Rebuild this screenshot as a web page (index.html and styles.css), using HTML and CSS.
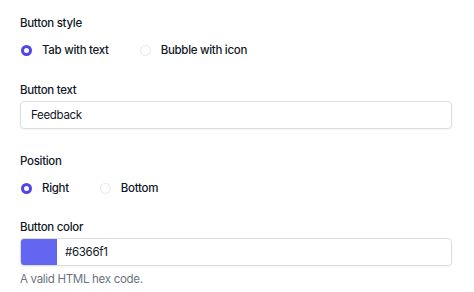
FILE: index.html
```html
<!DOCTYPE html>
<html>
<head>
<meta charset="utf-8">
<link rel="stylesheet" href="styles.css">
</head>
<body>
<form class="settings">
  <fieldset class="field">
    <legend class="label">Button style</legend>
    <div class="radios">
      <label class="radio"><span class="dot checked"></span>Tab with text</label>
      <label class="radio"><span class="dot"></span>Bubble with icon</label>
    </div>
  </fieldset>
  <div class="field after-radios">
    <div class="label label-input">Button text</div>
    <div class="input"><span class="value">Feedback</span></div>
  </div>
  <fieldset class="field after-input">
    <legend class="label">Position</legend>
    <div class="radios">
      <label class="radio"><span class="dot checked"></span>Right</label>
      <label class="radio"><span class="dot"></span>Bottom</label>
    </div>
  </fieldset>
  <div class="field after-radios last">
    <div class="label label-input">Button color</div>
    <div class="input color-input"><span class="swatch"></span><span class="value">#6366f1</span></div>
    <div class="help">A valid HTML hex code.</div>
  </div>
</form>
</body>
</html>
```
FILE: styles.css
```css
* { box-sizing: border-box; }
html, body { margin: 0; background: #fff; }
body {
  font-family: Inter, "Noto Sans", sans-serif;
  font-size: 11.5px;
  letter-spacing: -0.3px;
  color: #111827;
  padding: 15px 22px 0 20px;
}
.settings { display: flex; flex-direction: column; }
.field { border: 0; margin: 0; padding: 0; min-width: 0; }
.after-radios { margin-top: 22px; }
.after-input { margin-top: 24px; }
.after-radios.last { margin-top: 21px; }
.label {
  padding: 0;
  font-weight: 500;
  line-height: 16px;
  color: #111827;
}
fieldset.field > .label { float: left; width: 100%; }
.radios {
  clear: both;
  display: flex;
  gap: 30px;
  padding-top: 9px;
  height: 29px;
  align-items: center;
}
.radio {
  display: flex;
  align-items: center;
  gap: 10px;
  font-weight: 500;
  color: #111827;
  line-height: 20px;
}
.dot {
  width: 11px;
  height: 11px;
  border-radius: 50%;
  border: 1px solid #e5e7eb;
  background: #fff;
  margin-left: 1px;
}
.dot.checked {
  border: 3.5px solid #4f46e5;
}
.label-input { margin-bottom: 3px; }
.input {
  height: 28px;
  border: 1px solid #dcdde1;
  border-radius: 4px;
  box-shadow: 0 1px 2px rgba(0,0,0,0.05);
  display: flex;
  align-items: center;
  padding-left: 10px;
  color: #111827;
}
.color-input { padding-left: 0; overflow: hidden; }
.swatch {
  width: 36px;
  align-self: stretch;
  background: #6366f1;
  margin-right: 8px;
}
.help {
  margin-top: 5px;
  line-height: 16px;
  color: #6b7280;
}
```
